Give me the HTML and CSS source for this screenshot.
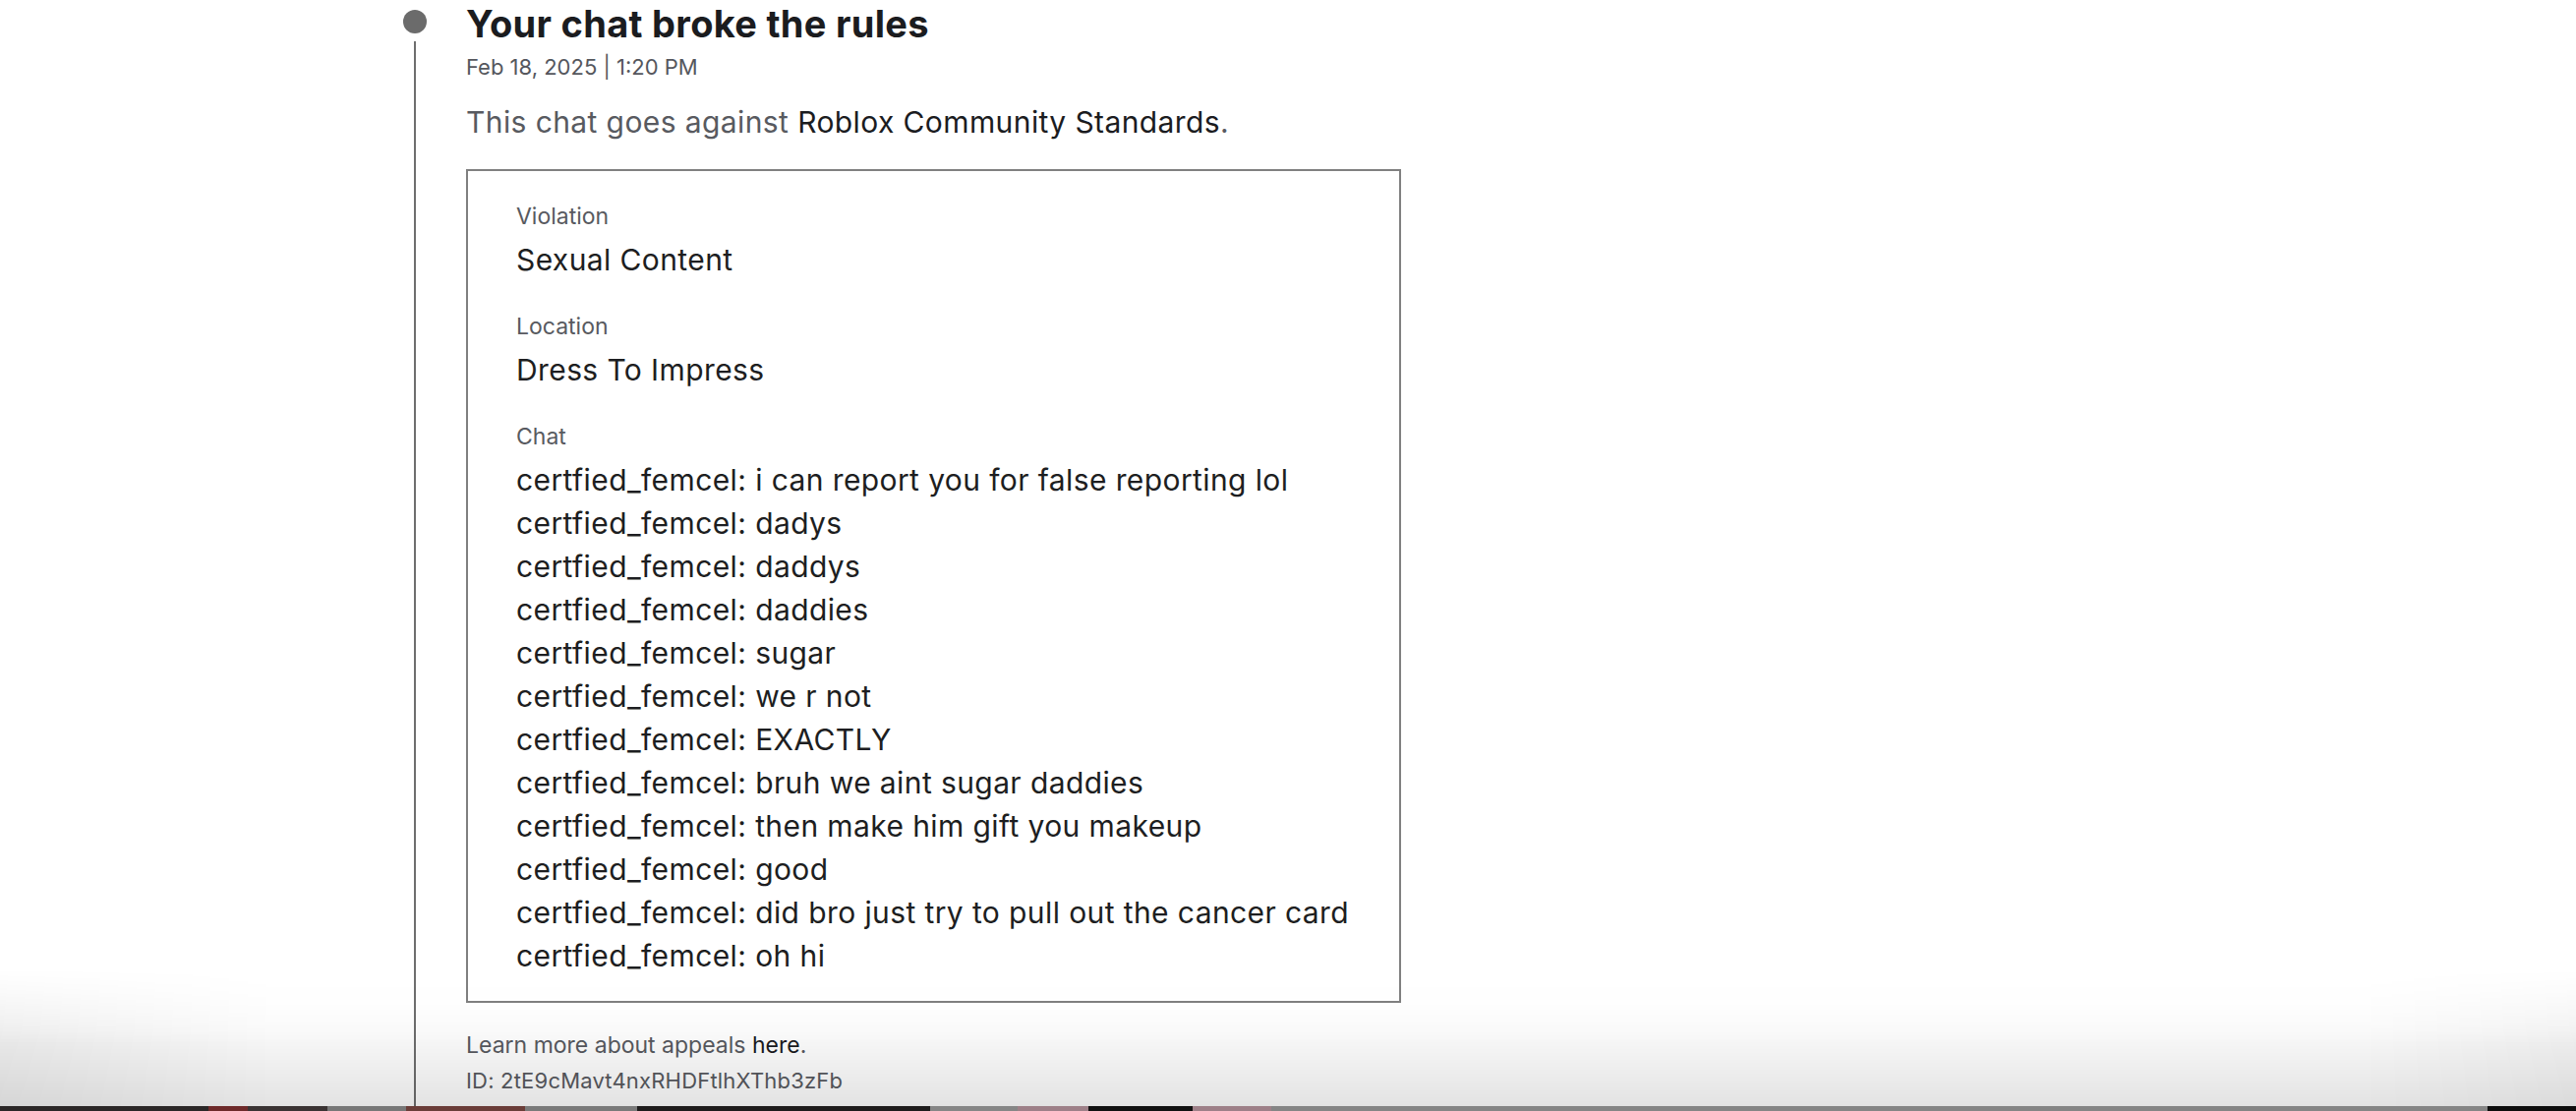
FILE: index.html
```html
<!DOCTYPE html>
<html lang="en">
<head>
<meta charset="utf-8">
<title>Your chat broke the rules</title>
<link rel="stylesheet" href="styles.css">
</head>
<body>
<div class="page">
  <div class="timeline">
    <div class="rail">
      <span class="dot"></span>
      <span class="line"></span>
    </div>
    <div class="content">
      <h1 class="title">Your chat broke the rules</h1>
      <div class="date">Feb 18, 2025 | 1:20 PM</div>
      <p class="intro">This chat goes against <a class="strong-link">Roblox Community Standards</a>.</p>
      <div class="card">
        <div class="field">
          <div class="label">Violation</div>
          <div class="value">Sexual Content</div>
        </div>
        <div class="field">
          <div class="label">Location</div>
          <div class="value">Dress To Impress</div>
        </div>
        <div class="field">
          <div class="label">Chat</div>
          <div class="value">certfied_femcel: i can report you for false reporting lol</div>
          <div class="value">certfied_femcel: dadys</div>
          <div class="value">certfied_femcel: daddys</div>
          <div class="value">certfied_femcel: daddies</div>
          <div class="value">certfied_femcel: sugar</div>
          <div class="value">certfied_femcel: we r not</div>
          <div class="value">certfied_femcel: EXACTLY</div>
          <div class="value">certfied_femcel: bruh we aint sugar daddies</div>
          <div class="value">certfied_femcel: then make him gift you makeup</div>
          <div class="value">certfied_femcel: good</div>
          <div class="value">certfied_femcel: did bro just try to pull out the cancer card</div>
          <div class="value">certfied_femcel: oh hi</div>
        </div>
      </div>
      <p class="learn">Learn more about appeals <a class="strong-link">here</a>.</p>
      <p class="ident">ID: 2tE9cMavt4nxRHDFtlhXThb3zFb</p>
    </div>
  </div>
  <div class="shade"></div>
  <div class="strip"></div>
</div>
</body>
</html>
```
FILE: styles.css
```css
* { box-sizing: border-box; }

html, body {
  margin: 0;
  padding: 0;
  background: #ffffff;
}

body {
  font-family: Inter, "Noto Sans", sans-serif;
  color: #1d1e21;
}

.page {
  position: relative;
  height: 1130px;
  overflow: hidden;
}

.timeline {
  display: flex;
  min-height: 1130px;
  padding-left: 410px;
}

.rail {
  width: 24px;
  display: flex;
  flex-direction: column;
  flex-shrink: 0;
}

.dot {
  display: block;
  width: 24px;
  height: 24px;
  margin-top: 10px;
  border-radius: 50%;
  background: #6b6b6b;
}

.line {
  display: block;
  flex: 1;
  width: 2px;
  margin-top: 8px;
  margin-left: 11px;
  background: #6e6e6e;
}

.content {
  margin-left: 40px;
  padding-top: 1px;
}

.title {
  margin: 0;
  font-size: 38px;
  line-height: 46px;
  font-weight: 700;
  letter-spacing: 0.3px;
  color: #1b1c1f;
}

.date {
  margin-top: 8px;
  font-size: 22px;
  line-height: 26px;
  color: #55575d;
}

.intro {
  margin: 25px 0 0;
  font-size: 30px;
  line-height: 36px;
  letter-spacing: 0.4px;
  color: #585a60;
}

.strong-link {
  color: #1b1c1f;
  text-decoration: none;
}

.card {
  margin-top: 30px;
  width: 951px;
  border: 2px solid #808080;
  padding: 33px 40px 24px 49px;
  display: flex;
  flex-direction: column;
  gap: 33px;
}

.label {
  font-size: 23px;
  line-height: 26px;
  margin-bottom: 9px;
  color: #585a60;
}

.value {
  font-size: 30px;
  line-height: 44px;
  letter-spacing: 0.4px;
  color: #1d1e21;
  white-space: nowrap;
}

.learn {
  margin: 30px 0 0;
  font-size: 23px;
  line-height: 26px;
  color: #585a60;
}

.ident {
  margin: 10px 0 0;
  font-size: 22px;
  line-height: 26px;
  letter-spacing: 0.2px;
  color: #585a60;
}

.shade {
  position: absolute;
  left: 0;
  right: 0;
  bottom: 5px;
  height: 140px;
  pointer-events: none;
  background:
    linear-gradient(to right, rgba(0,0,0,0.06), rgba(0,0,0,0) 280px),
    linear-gradient(to left, rgba(0,0,0,0.04), rgba(0,0,0,0) 220px),
    linear-gradient(to bottom, rgba(0,0,0,0), rgba(0,0,0,0.025) 45%, rgba(0,0,0,0.11));
  -webkit-mask-image: linear-gradient(to bottom, transparent, #000 55%);
  mask-image: linear-gradient(to bottom, transparent, #000 55%);
}

.strip {
  position: absolute;
  left: 0;
  right: 0;
  bottom: 0;
  height: 5px;
  background: linear-gradient(to right,
    #2b2727 0, #2b2727 212px,
    #6e2a2a 212px, #6e2a2a 252px,
    #3a3333 252px, #3a3333 333px,
    #777 333px, #777 413px,
    #6a3d38 413px, #6a3d38 534px,
    #7a7a7a 534px, #7a7a7a 648px,
    #1e1c1c 648px, #1e1c1c 946px,
    #868686 946px, #868686 1035px,
    #9e8088 1035px, #9e8088 1107px,
    #111 1107px, #111 1213px,
    #9e8088 1213px, #9e8088 1293px,
    #858585 1293px, #858585 2530px,
    #0d0d0d 2530px);
}
```
